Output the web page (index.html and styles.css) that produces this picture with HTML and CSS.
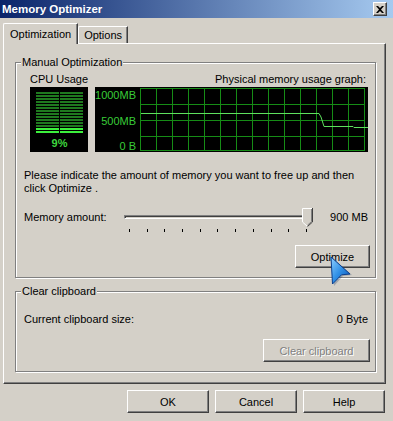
FILE: index.html
```html
<!DOCTYPE html>
<html lang="en">
<head>
  <meta charset="UTF-8">
  <meta name="viewport" content="width=device-width, initial-scale=1.0">
  <title>Memory Optimizer</title>
  <link rel="stylesheet" href="styles.css">
</head>
<body>

  <div class="window">
    <div class="titlebar">
      <span class="title">Memory Optimizer</span>
      <button class="close" aria-label="Close">
        <svg width="8" height="7" viewBox="0 0 8 7"><path d="M0 0h2l2 2 2-2h2L5 3.5 8 7H6L4 5 2 7H0l3-3.5z" fill="#000"/></svg>
      </button>
    </div>

    <div class="tabs">
      <div class="tab active">Optimization</div>
      <div class="tab">Options</div>
    </div>

    <div class="panel">
      <div class="group manual">
        <span class="group-title">Manual Optimization</span>

        <div class="monitor">
          <div class="cpu">
            <div class="caption">CPU Usage</div>
            <div class="cpu-box">
              <div class="cpu-bars">
                <div class="cpu-col"><div class="dim"></div><div class="lit"></div></div>
                <div class="cpu-col"><div class="dim"></div><div class="lit"></div></div>
              </div>
              <div class="cpu-value">9%</div>
            </div>
          </div>

          <div class="memory">
            <div class="caption right">Physical memory usage graph:</div>
            <div class="memory-row">
              <div class="scale">
                <span>1000MB</span>
                <span>500MB</span>
                <span>0 B</span>
              </div>
              <svg class="graph" width="231" height="65" viewBox="0 0 231 65">
                <rect width="231" height="65" fill="#000"/>
                <g stroke="#168c16" stroke-width="1">
                  <path d="M3.5 1v63M19.5 1v63M35.5 1v63M51.5 1v63M67.5 1v63M83.5 1v63M99.5 1v63M115.5 1v63M131.5 1v63M147.5 1v63M163.5 1v63M179.5 1v63M195.5 1v63M211.5 1v63M227.5 1v63"/>
                  <path d="M3 1.5h225M3 17.5h225M3 33.5h225M3 49.5h225M3 63.5h225"/>
                </g>
                <polyline points="4,26.5 182,26.5 184,30 187,39.5 216,39.5 217,40.5 231,40.5" fill="none" stroke="#5ee05e" stroke-width="1"/>
              </svg>
            </div>
          </div>
        </div>

        <p class="hint">Please indicate the amount of memory you want to free up and then<br>click Optimize .</p>

        <div class="slider-row">
          <span class="slider-label">Memory amount:</span>
          <div class="slider">
            <div class="slider-bar">
              <div class="track"></div>
              <svg class="thumb" width="11" height="19" viewBox="0 0 11 19">
                <path d="M0 0h11v14l-5.5 5L0 14z" fill="#d4d0c8"/>
                <path d="M0.5 14V0.5h9.5" fill="none" stroke="#fff"/>
                <path d="M0.5 14l5 4.5" fill="none" stroke="#fff"/>
                <path d="M10.5 0v14l-5 4.5" fill="none" stroke="#404040"/>
                <path d="M9.5 1v12.5l-4 3.7" fill="none" stroke="#808080"/>
              </svg>
            </div>
            <div class="ticks">
              <i></i><i></i><i></i><i></i><i></i><i></i><i></i><i></i><i></i><i></i><i></i>
            </div>
          </div>
          <span class="slider-value">900 MB</span>
        </div>

        <div class="actions">
          <button class="btn optimize">Optimize</button>
        </div>
      </div>

      <div class="group clipboard">
        <span class="group-title">Clear clipboard</span>
        <div class="info-row">
          <span>Current clipboard size:</span>
          <span class="info-value">0 Byte</span>
        </div>
        <div class="actions">
          <button class="btn clear" disabled>Clear clipboard</button>
        </div>
      </div>
    </div>

    <div class="footer">
      <button class="btn dialog">OK</button>
      <button class="btn dialog">Cancel</button>
      <button class="btn dialog">Help</button>
    </div>

    <!-- mouse pointer resting on the Optimize button -->
    <svg class="cursor" width="28" height="38" viewBox="0 0 28 38">
      <defs>
        <linearGradient id="arrow" x1="0" y1="0" x2="1" y2="1">
          <stop offset="0" stop-color="#8fd0ff"/>
          <stop offset="0.5" stop-color="#2f8fe6"/>
          <stop offset="1" stop-color="#0c4fb0"/>
        </linearGradient>
      </defs>
      <path d="M6 6l19 17-9 1-9 10z" fill="rgba(0,40,90,0.25)"/>
      <path d="M4 5l19 17-8.5 0.8L5.5 32z" fill="url(#arrow)" stroke="#0b3f8f" stroke-width="1"/>
    </svg>
  </div>

</body>
</html>
```

FILE: styles.css
```css
body {
  margin: 0;
  background-color: #d4d0c8;
  font-family: "Liberation Sans", Arial, sans-serif;
  font-size: 11px;
  color: #000;
  overflow: hidden;
}

.window {
  position: relative;
  width: 393px;
  height: 421px;
}

/* title bar */
.titlebar {
  height: 18px;
  display: flex;
  align-items: center;
  justify-content: space-between;
  padding: 0 6px 0 2px;
  background: linear-gradient(to right, #0a246a, #a6caf0);
}

.title {
  color: #fff;
  font-weight: bold;
  font-size: 11.5px;
}

.close {
  width: 14px;
  height: 14px;
  padding: 0;
  display: flex;
  align-items: center;
  justify-content: center;
  background-color: #d4d0c8;
  border: 1px solid;
  border-color: #fff #404040 #404040 #fff;
  box-shadow: inset -1px -1px #808080;
}

/* tabs */
.tabs {
  display: flex;
  align-items: flex-end;
  margin: 5px 0 0 3px;
}

.tab {
  height: 16px;
  line-height: 16px;
  padding: 0 5px;
  border-top: 1px solid #fff;
  border-left: 1px solid #fff;
  border-right: 1px solid #404040;
  border-top-left-radius: 2px;
  box-shadow: inset -1px 0 #808080;
  background-color: #d4d0c8;
}

.tab.active {
  height: 20px;
  line-height: 20px;
  padding: 0 6px;
  margin-bottom: -1px;
  position: relative;
  z-index: 1;
}

/* page inside the tab */
.panel {
  width: 383px;
  height: 341px;
  box-sizing: border-box;
  margin-left: 3px;
  padding: 18px 0 0 11px;
  border: 1px solid;
  border-color: #fff #404040 #404040 #fff;
  box-shadow: inset -1px -1px #808080;
}

.group {
  position: relative;
  width: 361px;
  box-sizing: border-box;
  padding: 10px 5px 8px 8px;
  border: 1px solid #808080;
  box-shadow: inset 1px 1px #fff, 1px 1px #fff;
}

.group-title {
  position: absolute;
  top: -7px;
  left: 5px;
  padding: 0 1px;
  line-height: 13px;
  background-color: #d4d0c8;
}

.manual {
  height: 216px;
}

.clipboard {
  margin-top: 13px;
  height: 81px;
  padding-top: 21px;
}

/* monitors */
.monitor {
  display: flex;
}

.caption {
  line-height: 13px;
  text-align: center;
  white-space: nowrap;
}

.caption.right {
  text-align: right;
  padding-right: 2px;
}

.cpu {
  width: 58px;
  margin-left: 6px;
}

.cpu-box {
  height: 65px;
  margin-top: 1px;
  box-sizing: border-box;
  padding: 5px 5px 0 6px;
  background-color: #000;
}

.cpu-bars {
  display: flex;
  gap: 1px;
}

.cpu-col {
  width: 23px;
}

.cpu-col .dim {
  height: 36px;
  background: repeating-linear-gradient(to bottom, #1f7a1f 0 2px, #000 2px 3px);
}

.cpu-col .lit {
  height: 6px;
  background: repeating-linear-gradient(to bottom, #3cf03c 0 2px, #000 2px 3px);
}

.cpu-value {
  margin-top: 3px;
  text-align: center;
  font-weight: bold;
  color: #3ed83e;
  line-height: 13px;
}

.memory {
  width: 273px;
  margin-left: 7px;
}

.memory-row {
  display: flex;
  margin-top: 1px;
}

.scale {
  width: 42px;
  height: 65px;
  box-sizing: border-box;
  padding: 3px 1px 0 0;
  display: flex;
  flex-direction: column;
  justify-content: space-between;
  align-items: flex-end;
  background-color: #000;
  color: #38cc38;
  line-height: 11px;
}

.graph {
  display: block;
}

.hint {
  margin: 17px 0 0;
  line-height: 13px;
}

/* slider */
.slider-row {
  display: flex;
  align-items: flex-start;
  margin-top: 13px;
}

.slider-label {
  width: 100px;
  line-height: 18px;
}

.slider {
  width: 186px;
}

.slider-bar {
  position: relative;
  height: 19px;
  display: flex;
  align-items: center;
}

.track {
  flex: 1;
  height: 2px;
  margin-top: -2px;
  border: 1px solid;
  border-color: #808080 #fff #fff #808080;
  box-shadow: inset 1px 1px #404040;
}

.thumb {
  position: absolute;
  left: 178px;
  top: 0;
}

.ticks {
  display: flex;
  justify-content: space-between;
  padding: 2px 3px 0 5px;
}

.ticks i {
  width: 1px;
  height: 3px;
  background-color: #000;
}

.slider-value {
  flex: 1;
  text-align: right;
  padding-right: 2px;
  line-height: 18px;
}

.actions {
  display: flex;
  justify-content: flex-end;
}

.manual .actions {
  margin-top: 13px;
}

.clipboard .actions {
  margin-top: 13px;
}

.info-row {
  display: flex;
  justify-content: space-between;
  line-height: 13px;
  padding-right: 2px;
}

/* buttons */
.btn {
  height: 23px;
  padding: 0;
  font-family: inherit;
  font-size: 11px;
  color: #000;
  background-color: #d4d0c8;
  border: 1px solid;
  border-color: #fff #404040 #404040 #fff;
  box-shadow: inset -1px -1px #808080;
}

.optimize {
  width: 75px;
}

.clear {
  width: 107px;
  color: #808080;
  text-shadow: 1px 1px #fff;
}

.footer {
  display: flex;
  justify-content: flex-end;
  gap: 6px;
  padding: 6px 8px 0 0;
}

.dialog {
  width: 82px;
}

.cursor {
  position: absolute;
  left: 327px;
  top: 252px;
}
```
